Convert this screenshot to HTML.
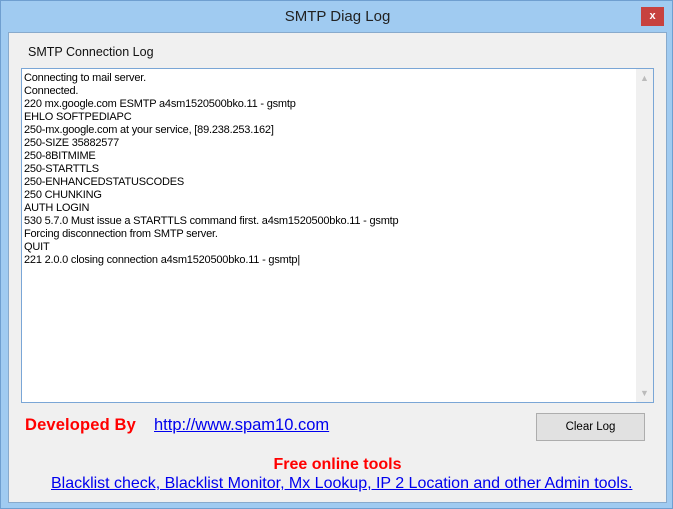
<!DOCTYPE html>
<html><head><style>
*{margin:0;padding:0;box-sizing:border-box}
body{width:673px;height:509px;background:#a0cbf1;position:relative;overflow:hidden;font-family:"Liberation Sans",sans-serif;border:1px solid #6f9fd0}
.title{position:absolute;left:0;top:7px;width:673px;text-align:center;font-size:15px;color:#222}
.x{position:absolute;left:640px;top:6px;width:23px;height:19px;background:#c7423f;color:#fff;font-size:11px;font-weight:bold;text-align:center;line-height:18px}
.client{position:absolute;left:7px;top:31px;width:659px;height:471px;background:#f0f0f0;border:1px solid #88aacc}
.lbl{position:absolute;left:27px;top:44px;font-size:12.5px;color:#111}
.box{position:absolute;left:20px;top:67px;width:633px;height:335px;background:#fff;border:1px solid #7aa6d6}
.sb{position:absolute;right:0;top:0;width:17px;height:100%;background:#f0f0f0}
.log{position:absolute;left:2px;top:2px;font-size:11px;line-height:13px;color:#000;white-space:pre;letter-spacing:-0.2px}
.sb span{position:absolute;left:4px;font-size:9px;color:#bbb}
.dev{position:absolute;left:24px;top:415px;font-size:16.5px;font-weight:bold;color:#f00;letter-spacing:0.15px}
.url{position:absolute;left:153px;top:415px;font-size:16.5px;color:#00e;text-decoration:underline}
.btn{position:absolute;left:535px;top:412px;width:109px;height:28px;background:#e1e1e1;border:1px solid #adadad;font-size:11.5px;text-align:center;line-height:26px;color:#000}
.free{position:absolute;left:0;width:673px;top:455px;text-align:center;font-size:16px;font-weight:bold;color:#f00}
.links{position:absolute;left:50px;top:474px;font-size:16px;color:#00e;text-decoration:underline;letter-spacing:-0.01px;white-space:nowrap}
</style></head><body>
<div class="title">SMTP Diag Log</div>
<div class="x">x</div>
<div class="client"></div>
<div class="lbl">SMTP Connection Log</div>
<div class="box"><div class="log" style="top:3px">Connecting to mail server.
Connected.
220 mx.google.com ESMTP a4sm1520500bko.11 - gsmtp
EHLO SOFTPEDIAPC
250-mx.google.com at your service, [89.238.253.162]
250-SIZE 35882577
250-8BITMIME
250-STARTTLS
250-ENHANCEDSTATUSCODES
250 CHUNKING
AUTH LOGIN
530 5.7.0 Must issue a STARTTLS command first. a4sm1520500bko.11 - gsmtp
Forcing disconnection from SMTP server.
QUIT
221 2.0.0 closing connection a4sm1520500bko.11 - gsmtp|</div><div class="sb"><span style="top:4px">▲</span><span style="bottom:4px">▼</span></div></div>
<div class="dev">Developed By</div>
<div class="url">http://www.spam10.com</div>
<div class="btn">Clear Log</div>
<div class="free">Free online tools</div>
<div class="links">Blacklist check, Blacklist Monitor, Mx Lookup, IP 2 Location and other Admin tools.</div>
</body></html>
